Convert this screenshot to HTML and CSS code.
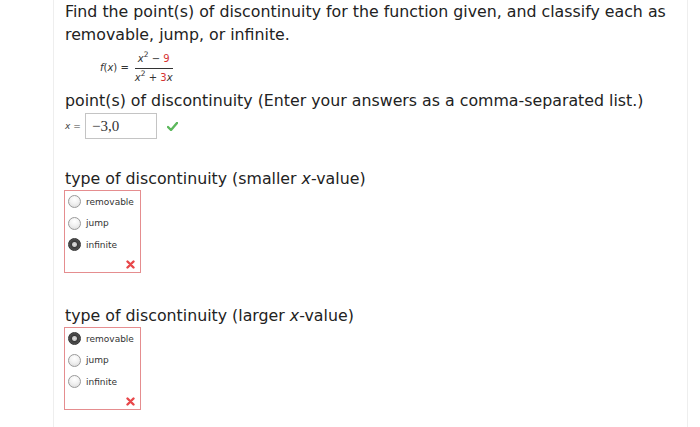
FILE: index.html
```html
<!DOCTYPE html>
<html>
<head>
<meta charset="utf-8">
<link rel="stylesheet" href="styles.css">
</head>
<body>
<div class="page">
  <p class="q">Find the point(s) of discontinuity for the function given, and classify each as removable, jump, or infinite.</p>
  <div class="formula">
    <span class="fx"><i>f</i>(<i>x</i>)&nbsp;=</span>
    <span class="frac">
      <span class="num"><i>x</i><sup>2</sup> − <span class="red">9</span></span>
      <span class="den"><i>x</i><sup>2</sup> + <span class="red">3</span><i>x</i></span>
    </span>
  </div>
  <p class="line">point(s) of discontinuity (Enter your answers as a comma-separated list.)</p>
  <div class="answer">
    <span class="xeq"><i>x</i> =</span>
    <span class="inbox">−3,0</span>
    <svg class="check" width="11" height="9" viewBox="0 0 11 9"><path d="M1 5 L4 8 L10 1" fill="none" stroke="#5cb85c" stroke-width="2.4" stroke-linecap="round" stroke-linejoin="round"/></svg>
  </div>
  <p class="line head1">type of discontinuity (smaller <i class="v">x</i>-value)</p>
  <div class="choices">
    <div class="opt"><span class="radio"></span>removable</div>
    <div class="opt"><span class="radio"></span>jump</div>
    <div class="opt"><span class="radio on"></span>infinite</div>
    <svg class="cross" width="9" height="9" viewBox="0 0 9 9"><path d="M1.5 1.5 L7.5 7.5 M7.5 1.5 L1.5 7.5" stroke="#e8474a" stroke-width="2.4" stroke-linecap="round"/></svg>
  </div>
  <p class="line head2">type of discontinuity (larger <i class="v">x</i>-value)</p>
  <div class="choices">
    <div class="opt"><span class="radio on"></span>removable</div>
    <div class="opt"><span class="radio"></span>jump</div>
    <div class="opt"><span class="radio"></span>infinite</div>
    <svg class="cross" width="9" height="9" viewBox="0 0 9 9"><path d="M1.5 1.5 L7.5 7.5 M7.5 1.5 L1.5 7.5" stroke="#e8474a" stroke-width="2.4" stroke-linecap="round"/></svg>
  </div>
</div>
</body>
</html>
```
FILE: styles.css
```css
html, body {
  margin: 0;
  background: #fff;
}
.page {
  margin-left: 53px;
  width: 635px;
  min-height: 427px;
  box-sizing: border-box;
  border-left: 1px solid #eeeeee;
  border-right: 1px solid #eeeeee;
  padding-left: 11px;
  font-family: "DejaVu Sans", Verdana, sans-serif;
  color: #222;
  display: flex;
  flex-direction: column;
  align-items: flex-start;
}
.q, .line {
  margin: 0;
  font-size: 15.8px;
  line-height: 23px;
  white-space: nowrap;
}
.q {
  width: 615px;
  white-space: normal;
}
.formula {
  display: flex;
  align-items: center;
  margin-left: 35px;
  height: 43px;
  font-size: 10px;
  color: #333;
}
.fx {
  margin-right: 3px;
}
.frac {
  display: inline-flex;
  flex-direction: column;
  align-items: center;
  margin-top: 2px;
}
.num, .den {
  padding: 0 3px;
  line-height: 18px;
}
.num {
  border-bottom: 1px solid #333;
}
sup {
  font-size: 7.5px;
  vertical-align: 5px;
  line-height: 0;
}
.red {
  color: #d6312f;
}
.answer {
  display: flex;
  align-items: center;
  margin-top: 1px;
  height: 26px;
}
.xeq {
  font-size: 9px;
  color: #444;
  width: 20px;
}
.inbox {
  box-sizing: border-box;
  width: 72px;
  height: 26px;
  border: 1px solid #c4c4c4;
  padding-left: 6px;
  font-family: "Liberation Serif", serif;
  font-size: 15px;
  line-height: 24px;
  color: #333;
}
.check {
  margin-left: 10px;
}
.head1 {
  margin-top: 28px;
}
.head2 {
  margin-top: 31px;
}
.v {
  font-style: italic;
}
.choices {
  position: relative;
  box-sizing: border-box;
  width: 77px;
  height: 83px;
  margin-left: -1px;
  border: 1px solid #e58d8f;
  padding: 0 0 0 3px;
}
.opt {
  display: flex;
  align-items: center;
  height: 21.5px;
  font-size: 9px;
  color: #333;
}
.radio {
  box-sizing: border-box;
  width: 13px;
  height: 13px;
  border-radius: 50%;
  border: 1px solid #9a9a9a;
  background: radial-gradient(circle at 50% 30%, #ffffff 0, #f2f2f2 45%, #d8d8d8 100%);
  margin-right: 5px;
}
.radio.on {
  border-color: #333;
  background: radial-gradient(circle at 50% 50%, #e0e0e0 0, #c8c8c8 2px, #3a3a3a 3px, #555 6px);
}
.cross {
  position: absolute;
  right: 5px;
  bottom: 3px;
}
```
